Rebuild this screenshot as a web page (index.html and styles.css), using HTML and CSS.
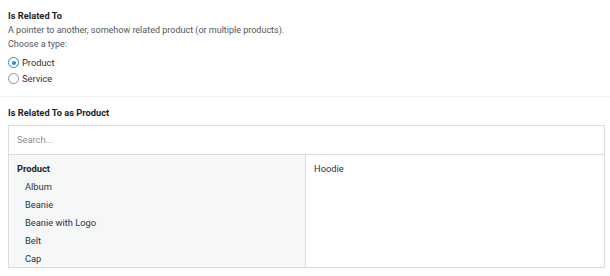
FILE: index.html
```html
<!DOCTYPE html>
<html>
<head>
<meta charset="utf-8">
<link rel="stylesheet" href="styles.css">
</head>
<body>
<div class="field">
  <div class="label">Is Related To</div>
  <div class="desc">A pointer to another, somehow related product (or multiple products).</div>
  <div class="desc">Choose a type:</div>
  <div class="radios">
    <label class="radio"><span class="dot checked"></span>Product</label>
    <label class="radio"><span class="dot"></span>Service</label>
  </div>
</div>
<div class="field second">
  <div class="label">Is Related To as Product</div>
  <div class="picker">
    <div class="search">Search...</div>
    <div class="cols">
      <div class="left">
        <div class="group">Product</div>
        <div class="item">Album</div>
        <div class="item">Beanie</div>
        <div class="item">Beanie with Logo</div>
        <div class="item">Belt</div>
        <div class="item">Cap</div>
      </div>
      <div class="right">
        <div class="sel">Hoodie</div>
      </div>
    </div>
  </div>
</div>
</body>
</html>
```
FILE: styles.css
```css
html, body { margin: 0; padding: 0; background: #fff; }
body {
  font-family: Roboto, "Noto Sans", sans-serif;
  font-size: 9.3px;
  color: #3c434a;
  width: 610px;
  height: 276px;
  overflow: hidden;
}
.field { padding: 9px 8px 0 8px; }
.label { font-weight: 700; color: #1d2327; line-height: 14px; }
.desc { line-height: 14px; color: #50575e; font-size: 9px; }
.radios { margin-top: 5px; padding-bottom: 11px; display: flex; flex-direction: column; gap: 3px; }
.radio { display: flex; align-items: center; line-height: 13px; color: #2c3338; }
.dot {
  width: 11px; height: 11px; border-radius: 50%;
  border: 1px solid #8c8f94; box-sizing: border-box; margin-right: 3px;
  position: relative; background: #fff;
}
.dot.checked { border-color: #3582c4; }
.dot.checked::after {
  content: ""; position: absolute; left: 2.5px; top: 2.5px; width: 4px; height: 4px;
  border-radius: 50%; background: #3582c4;
}
.second { border-top: 1px solid #f0f0f1; padding-top: 9px; }
.picker {
  margin-top: 5px; border: 1px solid #dcdcde; width: 597px; box-sizing: border-box;
  height: 143px; overflow: hidden;
}
.search {
  height: 29px; line-height: 28px; padding-left: 8px; color: #8c8f94;
  border-bottom: 1px solid #dcdcde; box-sizing: border-box;
}
.cols { display: flex; height: 113px; }
.left { width: 297px; background: #f6f7f7; border-right: 1px solid #dcdcde; padding: 5px 0 0 8px; box-sizing: border-box; }
.group { font-weight: 700; color: #1d2327; line-height: 18px; }
.item { padding-left: 8px; line-height: 18px; color: #2c3338; }
.right { flex: 1; padding: 5px 0 0 8px; }
.sel { line-height: 18px; color: #2c3338; }
```
